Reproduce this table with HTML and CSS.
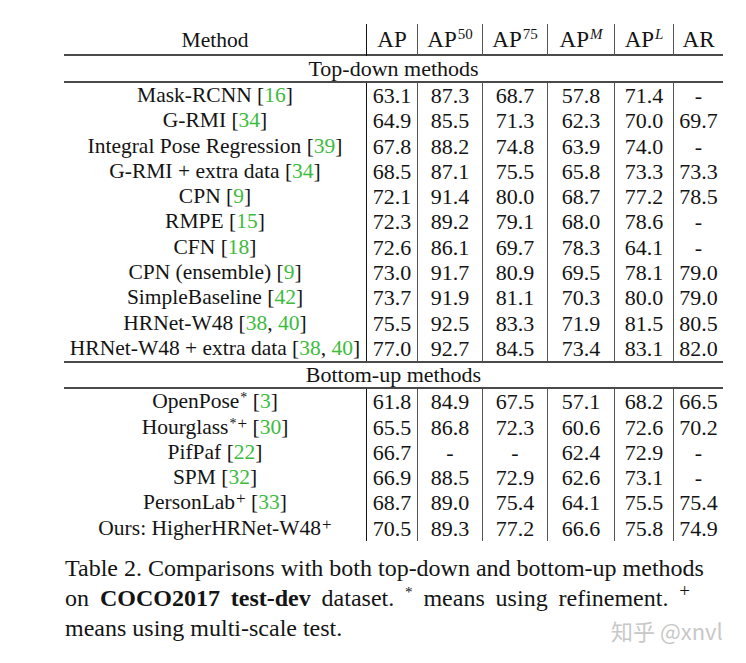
FILE: index.html
```html
<!DOCTYPE html>
<html>
<head>
<meta charset="utf-8">
<link rel="stylesheet" href="styles.css">
</head>
<body>
<div class="page">
  <div class="tbl">
    <div class="row head">
      <div class="c m">Method</div>
      <div class="c n">AP</div>
      <div class="c n">AP<span class="s">50</span></div>
      <div class="c n">AP<span class="s">75</span></div>
      <div class="c n">AP<span class="s i">M</span></div>
      <div class="c n">AP<span class="s i">L</span></div>
      <div class="c n">AR</div>
    </div>
    <div class="rule"></div>
    <div class="section">Top-down methods</div>
    <div class="rule"></div>

    <div class="row"><div class="c m">Mask-RCNN [<span class="cite">16</span>]</div><div class="c n">63.1</div><div class="c n">87.3</div><div class="c n">68.7</div><div class="c n">57.8</div><div class="c n">71.4</div><div class="c n">-</div></div>
    <div class="row"><div class="c m">G-RMI [<span class="cite">34</span>]</div><div class="c n">64.9</div><div class="c n">85.5</div><div class="c n">71.3</div><div class="c n">62.3</div><div class="c n">70.0</div><div class="c n">69.7</div></div>
    <div class="row"><div class="c m">Integral Pose Regression [<span class="cite">39</span>]</div><div class="c n">67.8</div><div class="c n">88.2</div><div class="c n">74.8</div><div class="c n">63.9</div><div class="c n">74.0</div><div class="c n">-</div></div>
    <div class="row"><div class="c m">G-RMI + extra data [<span class="cite">34</span>]</div><div class="c n">68.5</div><div class="c n">87.1</div><div class="c n">75.5</div><div class="c n">65.8</div><div class="c n">73.3</div><div class="c n">73.3</div></div>
    <div class="row"><div class="c m">CPN [<span class="cite">9</span>]</div><div class="c n">72.1</div><div class="c n">91.4</div><div class="c n">80.0</div><div class="c n">68.7</div><div class="c n">77.2</div><div class="c n">78.5</div></div>
    <div class="row"><div class="c m">RMPE [<span class="cite">15</span>]</div><div class="c n">72.3</div><div class="c n">89.2</div><div class="c n">79.1</div><div class="c n">68.0</div><div class="c n">78.6</div><div class="c n">-</div></div>
    <div class="row"><div class="c m">CFN [<span class="cite">18</span>]</div><div class="c n">72.6</div><div class="c n">86.1</div><div class="c n">69.7</div><div class="c n">78.3</div><div class="c n">64.1</div><div class="c n">-</div></div>
    <div class="row"><div class="c m">CPN (ensemble) [<span class="cite">9</span>]</div><div class="c n">73.0</div><div class="c n">91.7</div><div class="c n">80.9</div><div class="c n">69.5</div><div class="c n">78.1</div><div class="c n">79.0</div></div>
    <div class="row"><div class="c m">SimpleBaseline [<span class="cite">42</span>]</div><div class="c n">73.7</div><div class="c n">91.9</div><div class="c n">81.1</div><div class="c n">70.3</div><div class="c n">80.0</div><div class="c n">79.0</div></div>
    <div class="row"><div class="c m">HRNet-W48 [<span class="cite">38</span>, <span class="cite">40</span>]</div><div class="c n">75.5</div><div class="c n">92.5</div><div class="c n">83.3</div><div class="c n">71.9</div><div class="c n">81.5</div><div class="c n">80.5</div></div>
    <div class="row"><div class="c m">HRNet-W48 + extra data [<span class="cite">38</span>, <span class="cite">40</span>]</div><div class="c n">77.0</div><div class="c n">92.7</div><div class="c n">84.5</div><div class="c n">73.4</div><div class="c n">83.1</div><div class="c n">82.0</div></div>

    <div class="rule"></div>
    <div class="section short">Bottom-up methods</div>
    <div class="rule"></div>

    <div class="row"><div class="c m">OpenPose<span class="ms">*</span> [<span class="cite">3</span>]</div><div class="c n">61.8</div><div class="c n">84.9</div><div class="c n">67.5</div><div class="c n">57.1</div><div class="c n">68.2</div><div class="c n">66.5</div></div>
    <div class="row"><div class="c m">Hourglass<span class="ms">*</span><span class="ms plus">+</span> [<span class="cite">30</span>]</div><div class="c n">65.5</div><div class="c n">86.8</div><div class="c n">72.3</div><div class="c n">60.6</div><div class="c n">72.6</div><div class="c n">70.2</div></div>
    <div class="row"><div class="c m">PifPaf [<span class="cite">22</span>]</div><div class="c n">66.7</div><div class="c n">-</div><div class="c n">-</div><div class="c n">62.4</div><div class="c n">72.9</div><div class="c n">-</div></div>
    <div class="row"><div class="c m">SPM [<span class="cite">32</span>]</div><div class="c n">66.9</div><div class="c n">88.5</div><div class="c n">72.9</div><div class="c n">62.6</div><div class="c n">73.1</div><div class="c n">-</div></div>
    <div class="row"><div class="c m">PersonLab<span class="ms plus">+</span> [<span class="cite">33</span>]</div><div class="c n">68.7</div><div class="c n">89.0</div><div class="c n">75.4</div><div class="c n">64.1</div><div class="c n">75.5</div><div class="c n">75.4</div></div>
    <div class="row"><div class="c m">Ours: HigherHRNet-W48<span class="ms plus">+</span></div><div class="c n">70.5</div><div class="c n">89.3</div><div class="c n">77.2</div><div class="c n">66.6</div><div class="c n">75.8</div><div class="c n">74.9</div></div>
  </div>

  <div class="caption">
    <div class="line just">Table 2. Comparisons with both top-down and bottom-up methods</div>
    <div class="line just second">on <b>COCO2017 test-dev</b> dataset. <span class="cs">*</span> means using refinement. <span class="cs plus">+</span></div>
    <div class="line">means using multi-scale test.</div>
  </div>

  <div class="watermark">知乎 @xnvl</div>
</div>
</body>
</html>
```

FILE: styles.css
```css
html, body {
  margin: 0;
  padding: 0;
  background: #ffffff;
}

.page {
  position: relative;
  width: 746px;
  height: 663px;
  padding-top: 24px;
  box-sizing: border-box;
  color: #141414;
  font-family: "Liberation Serif", "Times New Roman", serif;
}

.tbl {
  margin-left: 64px;
  width: 659px;
}

.row {
  display: grid;
  grid-template-columns: 302px 51px 65px 65px 67px 59px 50px;
  height: 25.3px;
  line-height: 25.3px;
}

.row.head {
  height: 30px;
  line-height: 32px;
}

.c {
  text-align: center;
  white-space: nowrap;
  box-sizing: border-box;
}

.c + .c {
  border-left: 1px solid #555555;
}

.m + .c {
  border-left: 1px solid #111111;
}

.m {
  font-size: 21.5px;
}

.n {
  font-size: 22px;
}

.head .n {
  font-size: 23px;
}

.s {
  font-size: 15px;
  position: relative;
  top: -8px;
  margin-left: 1px;
  line-height: 0;
}

.i {
  font-style: italic;
}

.ms {
  font-size: 14px;
  position: relative;
  top: -6px;
  margin-left: 1px;
  line-height: 0;
}

.ms.plus {
  font-size: 17px;
  top: -5px;
}

.cite {
  color: #3cbc3c;
}

.rule {
  height: 2px;
  background: #4a4a4a;
}

.section {
  height: 25px;
  line-height: 25px;
  text-align: center;
  font-size: 22px;
}

.section.short {
  height: 24px;
  line-height: 24px;
}

.caption {
  margin-top: 12px;
  margin-left: 65px;
  width: 632px;
  font-size: 24px;
  line-height: 30px;
  color: #141414;
}

.line {
  white-space: nowrap;
}

.line.just {
  text-align: justify;
  text-align-last: justify;
}

.line.second {
  padding-right: 7px;
}

.cs {
  font-size: 15px;
  position: relative;
  top: -9px;
  line-height: 0;
}

.cs.plus {
  font-size: 19px;
}

.watermark {
  position: absolute;
  left: 611px;
  top: 616px;
  font-family: "Noto Sans CJK SC", "Noto Sans", sans-serif;
  font-size: 22px;
  line-height: 28px;
  color: #c8c8c8;
}
```
